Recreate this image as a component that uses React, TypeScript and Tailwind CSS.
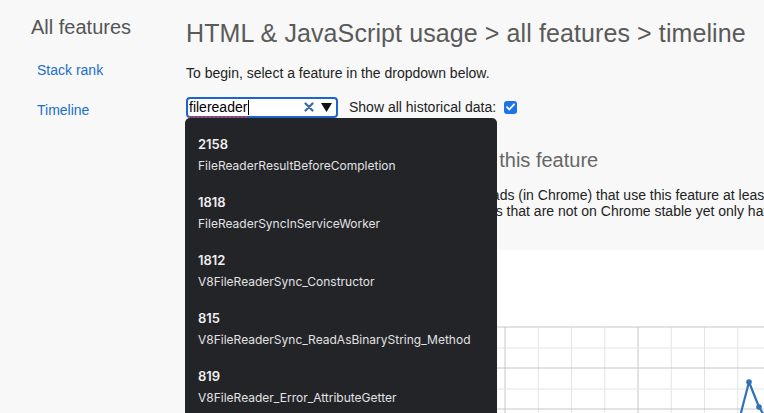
import React from "react";

const results = [
  { id: "2158", name: "FileReaderResultBeforeCompletion" },
  { id: "1818", name: "FileReaderSyncInServiceWorker" },
  { id: "1812", name: "V8FileReaderSync_Constructor" },
  { id: "815", name: "V8FileReaderSync_ReadAsBinaryString_Method" },
  { id: "819", name: "V8FileReader_Error_AttributeGetter" },
  { id: "2177", name: "FileReaderSyncReadAsArrayBuffer" },
];

const sans = { fontFamily: '"Liberation Sans", Arial, sans-serif' };

function Chart() {
  const rows = [77, 98, 118, 139, 159];
  const cols: number[] = [];
  for (let k = -8; k <= 12; k++) cols.push(319 + 33.25 * k);
  return (
    <svg width="760" height="200" className="block">
      {cols.map((x, i) => (
        <line
          key={"c" + i}
          x1={x}
          x2={x}
          y1={77}
          y2={200}
          stroke={(i - 8) % 4 === 0 ? "#c6c6c6" : "#e4e4e4"}
          strokeWidth="1"
        />
      ))}
      {rows.map((y, i) => (
        <line
          key={"r" + i}
          x1={40}
          x2={760}
          y1={y}
          y2={y}
          stroke={i % 2 === 0 ? "#c6c6c6" : "#e4e4e4"}
          strokeWidth="1"
        />
      ))}
      <polyline
        points="551,178 563,132 573,157 584,175"
        fill="none"
        stroke="#2f72b8"
        strokeWidth="2.2"
        strokeLinejoin="round"
      />
      <circle cx="563" cy="132" r="2.8" fill="#2f72b8" />
      <circle cx="573" cy="157" r="2.8" fill="#2f72b8" />
    </svg>
  );
}

export default function App() {
  return (
    <div className="w-[764px] h-[413px] overflow-hidden bg-[#f8f8f8] flex" style={sans}>
      {/* sidebar */}
      <div className="w-[186px] shrink-0 flex flex-col">
        <div className="pl-[31px] pt-[15px] h-[39px] text-[20px] leading-[24px] text-[#555]">
          All features
        </div>
        <a className="pl-[37px] mt-[21px] text-[14px] leading-[20px] text-[#1a6fc9]">Stack rank</a>
        <a className="pl-[37px] mt-[20px] text-[14px] leading-[20px] text-[#1a6fc9]">Timeline</a>
      </div>

      {/* main */}
      <div className="w-[900px] shrink-0 flex flex-col">
        <div className="pb-[31px]">
          <h1 className="pt-[17px] text-[25px] leading-[32px] tracking-[0.1px] text-[#5a5a5a] whitespace-nowrap font-light">
            HTML &amp; JavaScript usage &gt; all features &gt; timeline
          </h1>
          <p className="mt-[14px] text-[14px] leading-[20px] text-[#222]">
            To begin, select a feature in the dropdown below.
          </p>

          <div className="relative mt-[14px] h-[20px] flex items-center">
            <div className="relative w-[152px] h-[21px] border-2 border-[#1d64d1] rounded-[4px] bg-white flex items-center pl-[1px]">
              <span className="relative text-[14px] leading-[16px] text-black">
                filereader
                <span className="absolute left-0 right-0 bottom-[-3px] border-b-2 border-dotted border-[#e0353b]" />
              </span>
              <span className="w-[1px] h-[15px] bg-black ml-[1px]" />
              <span className="ml-auto mr-[4px] flex items-center gap-[7px]">
                <svg width="10" height="10" viewBox="0 0 10 10">
                  <path d="M1.5 1.5 L8.5 8.5 M8.5 1.5 L1.5 8.5" stroke="#3a6aa8" strokeWidth="2.2" strokeLinecap="round" />
                </svg>
                <svg width="11" height="10" viewBox="0 0 11 10">
                  <path d="M0 1 H11 L5.5 10 Z" fill="#111" />
                </svg>
              </span>
            </div>
            <span className="ml-[11px] text-[14px] leading-[20px] text-[#222]">Show all historical data:</span>
            <span className="ml-[8px] w-[13px] h-[13px] rounded-[3px] bg-[#1a73e8] flex items-center justify-center">
              <svg width="9" height="8" viewBox="0 0 9 8">
                <path d="M1 4.2 L3.4 6.5 L8 1.3" stroke="#fff" strokeWidth="1.8" fill="none" strokeLinecap="round" strokeLinejoin="round" />
              </svg>
            </span>

            {/* autocomplete dropdown */}
            <div
              className="absolute left-[-1px] top-[21px] w-[312px] h-[330px] bg-[#232428] rounded-[5px] z-10 flex flex-col"
              style={{ fontFamily: 'Inter, "Noto Sans", sans-serif' }}
            >
              {results.map((r) => (
                <div key={r.id} className="h-[58px] shrink-0 pt-[18px] pl-[13px]">
                  <div className="text-[13px] leading-[16px] font-semibold text-[#efefef]">{r.id}</div>
                  <div className="mt-[6px] text-[12px] leading-[16px] text-[#e2e2e2]">{r.name}</div>
                </div>
              ))}
            </div>
          </div>

          <h2 className="mt-[31px] pl-[3px] text-[20px] leading-[24px] text-[#666] font-light whitespace-nowrap">
            Percentage of page loads that use this feature
          </h2>
          <p className="mt-[15px] text-[14px] leading-[16px] text-[#222] whitespace-nowrap">
            The chart below shows the percentage of page loads (in Chrome) that use this feature at least once. Data is across all platforms.
          </p>
          <p className="text-[14px] leading-[16px] text-[#222] whitespace-nowrap">
            Newly added use counter for experimental features that are not on Chrome stable yet only have data from the Chrome channels they're on.
          </p>
        </div>
        <div className="bg-white flex-1">
          <Chart />
        </div>
      </div>
    </div>
  );
}
